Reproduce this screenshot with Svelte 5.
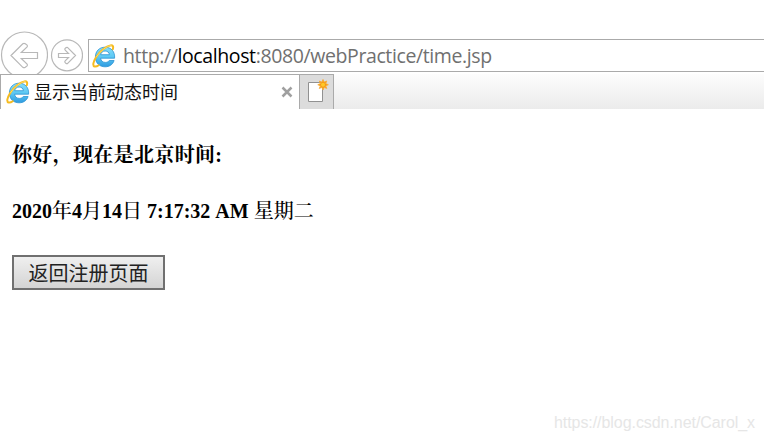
<script>
  const host = 'localhost';
  const path = ':8080/webPractice/time.jsp';
</script>

{#snippet ieLogo(size)}
  <svg class="ie" width={size} height={size} viewBox="0 0 24 24">
    <defs>
      <linearGradient id="blue" x1="0" y1="0" x2="0" y2="1">
        <stop offset="0" stop-color="#86ddfa" />
        <stop offset=".5" stop-color="#5cc8f3" />
        <stop offset="1" stop-color="#2f9be0" />
      </linearGradient>
    </defs>
    <path d="M22.600 14.200H8.600c.3 2.700 2.200 4.200 4.700 4.200 1.900 0 3.100-.7 4-1.900h4.800c-1.300 4.100-4.700 6.300-9 6.300-5.800 0-9.700-3.900-9.700-9.800S7.400 3.200 13 3.200c6.200 0 10.100 4.400 9.600 11zM8.700 10.700h8.700c-.2-2.300-1.900-3.700-4.300-3.700s-4.100 1.500-4.400 3.700z" fill="url(#blue)" stroke="#2b93d3" stroke-width=".8" />
    <path d="M20.800 5.200C21.700 2.400 20.800 1.100 18.400 1.400 14.200 2 7.800 7.300 4.200 13 1 18 .4 22 2.700 22.500c1.200.2 2.600-.3 4-1.300" fill="none" stroke="#f5bb20" stroke-width="2" stroke-linecap="round" />
    <path d="M19.500 1.500C14.700 1.700 8.200 7.200 4.300 13.200" fill="none" stroke="#ffe27a" stroke-width=".8" />
  </svg>
{/snippet}

<div class="window">
  <header class="toolbar">
    <svg class="back" width="48" height="48" viewBox="0 0 48 48">
      <circle cx="24.500" cy="24" r="23" />
      <path d="M11 24.500 22.800 12.800q1.200-.8 2.500 0l1.800 1.300q.7.900 0 1.800L21.300 21.500H37.500v6H21.300l5.800 5.600q.7.900 0 1.800l-1.800 1.400q-1.300.8-2.500 0z" />
    </svg>
    <svg class="forward" width="33" height="33" viewBox="0 0 33 33">
      <circle cx="17" cy="16.300" r="15.500" />
      <path d="M25.500 16.500 17.700 8.600q-.9-.6-1.800.2l-.9.900q-.5.700.2 1.400l3.300 3.400H8.500v4h10l-3.300 3.400q-.7.700-.2 1.400l.9.900q.9.800 1.800.2z" />
    </svg>
    <div class="address">
      {@render ieLogo(24)}
      <span class="url">http://<b>{host}</b>{path}</span>
    </div>
  </header>

  <nav class="tabs">
    <div class="tab">
      {@render ieLogo(24)}
      <span class="title">显示当前动态时间</span>
      <svg class="close" width="12" height="12" viewBox="0 0 12 12"><path d="M1.500 1.500l9 9M10.500 1.500l-9 9" /></svg>
    </div>
    <div class="new-tab">
      <svg width="24" height="26" viewBox="0 0 24 26">
        <path d="M3.500 4.500h14v19h-14z" fill="#fff" stroke="#919191" />
        <path d="M18 1.500l1.200 2.600 2.600-1.100-1.100 2.600 2.600 1.100-2.600 1.200 1.100 2.500-2.600-1-1.200 2.600-1.100-2.600-2.600 1 1.100-2.500-2.600-1.200 2.600-1.100L14.300 3l2.600 1.100z" fill="#f59a14" stroke="#f7ae3c" stroke-width=".9" />
        <circle cx="18" cy="6.700" r="2" fill="#ffc928" />
      </svg>
    </div>
  </nav>

  <main>
    <h4 class="hello">你好，现在是北京时间:</h4>
    <h4 class="date">2020<i>年</i>4<i>月</i>14<i>日</i> 7:17:32 AM <i>星期二</i></h4>
    <button>返回注册页面</button>
  </main>
  <footer>https://blog.csdn.net/Carol_x</footer>
</div>

<style>
  :global(body) { margin: 0; background: #fff; }
  .window {
    width: 764px; height: 441px; overflow: hidden; box-sizing: border-box;
    display: flex; flex-direction: column; background: #fff;
    font-family: "Open Sans", "Noto Sans CJK SC", sans-serif;
  }
  .toolbar {
    height: 74px; flex: none; box-sizing: border-box; overflow: hidden;
    padding-top: 31px; display: flex; align-items: flex-start;
  }
  .toolbar > svg { flex: none; fill: #fff; stroke: #b8b8b8; stroke-width: 1.2; }
  .forward { margin: 8px 0 0 2px; }
  .address {
    flex: 1; height: 33px; box-sizing: border-box; margin: 8px 0 0 5px;
    border: 1px solid #aaa; border-right: 0; display: flex; align-items: center;
    padding-left: 3px;
  }
  .ie { flex: none; display: block; }
  .url {
    margin-left: 7px; font-size: 19.500px; line-height: 31px; color: #707070;
    white-space: nowrap; letter-spacing: -0.390px;
  }
  .url b { font-weight: 400; color: #000; }
  .tabs {
    height: 35px; flex: none; display: flex;
    background: linear-gradient(#fdfdfd, #ebebeb);
  }
  .tab {
    width: 300px; box-sizing: border-box; background: #fff;
    border: solid #aaa; border-width: 1px 1px 0 1px;
    display: flex; align-items: center; padding: 0 6px 0 5px;
  }
  .title { margin-left: 4px; font: 18px/32px "Noto Sans CJK SC", sans-serif; color: #111; position: relative; top: -1px; }
  .close { margin-left: auto; fill: none; stroke: #a0a0a0; stroke-width: 2.500; }
  .new-tab {
    width: 34px; box-sizing: border-box; background: #dcdcdc;
    border: solid #aaa; border-width: 1px 1px 0 0; padding: 3px 0 0 5px;
  }
  .new-tab svg { display: block; }
  main { flex: 1; padding: 32px 12px 0; }
  h4 {
    margin: 0; height: 28px; font: bold 20px/28px "Liberation Serif", "Noto Serif CJK SC", "Noto Sans CJK SC", serif;
    color: #000; white-space: nowrap;
  }
  .hello { letter-spacing: 0.330px; font-weight: 700; }
  .date { margin-top: 28px; }
  i { font-style: normal; font-weight: 500; }
  button {
    display: block; width: 153px; height: 35px; box-sizing: border-box; margin-top: 30px; padding: 1px 0 0;
    border: 2px solid #707070; border-radius: 0;
    background: linear-gradient(#efefef, #d4d4d4);
    font: 20px/30px "Noto Sans CJK SC", sans-serif; color: #222;
  }
  footer {
    height: 28px; padding-right: 9px; text-align: right; color: #e6e6e6;
    font: 16px/20px "Liberation Sans", Arial, sans-serif; letter-spacing: -0.060px;
  }
</style>
